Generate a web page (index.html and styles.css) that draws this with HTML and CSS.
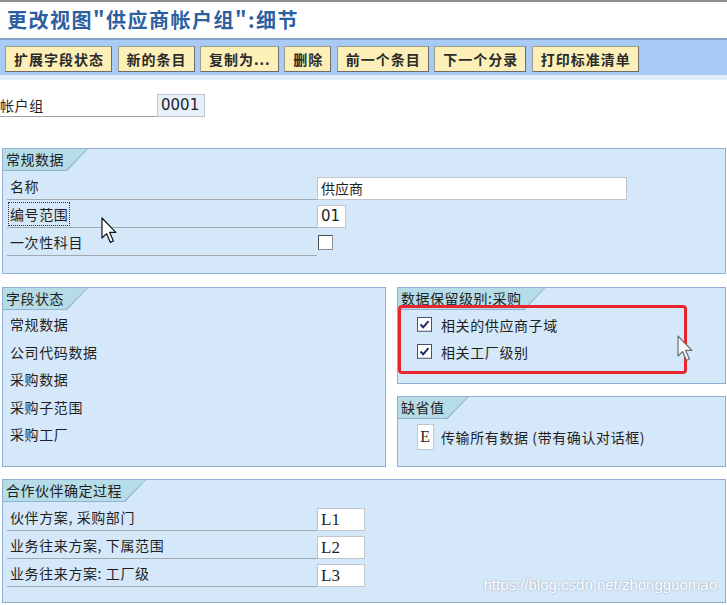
FILE: index.html
```html
<!DOCTYPE html>
<html lang="zh-CN">
<head>
  <meta charset="UTF-8">
  <title>更改视图"供应商帐户组":细节</title>
  <link rel="stylesheet" href="styles.css">
</head>
<body>

<div class="screen">
  <div class="titlebar">
    <h1>更改视图"供应商帐户组":细节</h1>
  </div>

  <div class="toolbar">
    <button class="btn">扩展字段状态</button>
    <button class="btn">新的条目</button>
    <button class="btn">复制为...</button>
    <button class="btn">删除</button>
    <button class="btn">前一个条目</button>
    <button class="btn">下一个分录</button>
    <button class="btn">打印标准清单</button>
  </div>

  <div class="content">
    <!-- key field -->
    <div class="keyrow">
      <span class="keylbl">帐户组</span>
      <span class="field num keyval">0001</span>
    </div>

    <!-- 常规数据 -->
    <section class="group general">
      <div class="tab"><span>常规数据</span></div>
      <div class="rows">
        <div class="row">
          <span class="lbl">名称</span>
          <span class="field name">供应商</span>
        </div>
        <div class="row">
          <span class="lbl"><span class="focus">编号范围</span></span>
          <span class="field num short">01</span>
        </div>
        <div class="row">
          <span class="lbl">一次性科目</span>
          <span class="checkbox"></span>
        </div>
      </div>
    </section>

    <div class="middle">
      <!-- 字段状态 -->
      <section class="group status">
        <div class="tab"><span>字段状态</span></div>
        <ul class="list">
          <li>常规数据</li>
          <li>公司代码数据</li>
          <li>采购数据</li>
          <li>采购子范围</li>
          <li>采购工厂</li>
        </ul>
      </section>

      <div class="side">
        <!-- 数据保留级别 -->
        <section class="group retain">
          <div class="tab"><span>数据保留级别:采购</span></div>
          <div class="checks">
            <div class="check">
              <svg width="15" height="15" viewBox="0 0 15 15">
                <rect x="0.5" y="0.5" width="14" height="14" fill="#fff" stroke="#4b5268"/>
                <line x1="1" y1="14" x2="14" y2="14" stroke="#9aa0b0"/>
                <path d="M3.5 7.5 L6.2 10.3 L11.5 4.2" fill="none" stroke="#1e2a66" stroke-width="2"/>
              </svg>
              <span>相关的供应商子域</span>
            </div>
            <div class="check">
              <svg width="15" height="15" viewBox="0 0 15 15">
                <rect x="0.5" y="0.5" width="14" height="14" fill="#fff" stroke="#4b5268"/>
                <line x1="1" y1="14" x2="14" y2="14" stroke="#9aa0b0"/>
                <path d="M3.5 7.5 L6.2 10.3 L11.5 4.2" fill="none" stroke="#1e2a66" stroke-width="2"/>
              </svg>
              <span>相关工厂级别</span>
            </div>
          </div>
          <div class="highlight"></div>
        </section>

        <!-- 缺省值 -->
        <section class="group defaults">
          <div class="tab"><span>缺省值</span></div>
          <div class="defrow">
            <span class="code">E</span>
            <span>传输所有数据 (带有确认对话框)</span>
          </div>
        </section>
      </div>
    </div>

    <!-- 合作伙伴确定过程 -->
    <section class="group partner">
      <div class="tab"><span>合作伙伴确定过程</span></div>
      <div class="rows">
        <div class="row">
          <span class="lbl">伙伴方案, 采购部门</span>
          <span class="field serif">L1</span>
        </div>
        <div class="row">
          <span class="lbl">业务往来方案, 下属范围</span>
          <span class="field serif">L2</span>
        </div>
        <div class="row">
          <span class="lbl">业务往来方案: 工厂级</span>
          <span class="field serif">L3</span>
        </div>
      </div>
    </section>
  </div>

  <!-- mouse pointers -->
  <svg class="cursor c1" width="16" height="27" viewBox="0 0 16 27">
    <path d="M1 1 L1 21 L5.6 16.6 L9.4 25.4 L12.4 24 L8.7 15.4 L14.8 15.4 Z" fill="#fff" stroke="#111" stroke-width="1.2" stroke-linejoin="round"/>
  </svg>
  <svg class="cursor c2" width="16" height="27" viewBox="0 0 16 27">
    <path d="M1 1 L1 21 L5.6 16.6 L9.4 25.4 L12.4 24 L8.7 15.4 L14.8 15.4 Z" fill="#f4f6f8" stroke="#6b6f76" stroke-width="1.2" stroke-linejoin="round"/>
  </svg>

  <div class="watermark">https://blog.csdn.net/zhongguomao</div>
</div>

</body>
</html>
```

FILE: styles.css
```css
body {
  margin: 0;
  font-family: "Noto Sans CJK SC", sans-serif;
  font-size: 14px;
  color: #1f1f1f;
  background: #fff;
}
.screen {
  position: relative;
  width: 727px;
  height: 605px;
  overflow: hidden;
}

/* title + toolbar */
.titlebar {
  height: 36px;
  border-top: 2px solid #8e8e8e;
}
.titlebar h1 {
  margin: 0;
  padding-left: 7px;
  font-size: 20px;
  line-height: 36px;
  letter-spacing: 1.5px;
  font-weight: bold;
  color: #2c5f9f;
}
.toolbar {
  display: flex;
  gap: 5.5px;
  padding: 6px 0 3px 5px;
  background: #a8cbf5;
  border-top: 2px solid #86a3c7;
  border-bottom: 5px solid #e3edfb;
}
.btn {
  height: 26px;
  box-sizing: border-box;
  padding: 0 7px 0 8px;
  border: 1px solid;
  border-color: #a09c8c #6e6c64 #6e6c64 #a09c8c;
  background: #fcefb8;
  font-family: inherit;
  font-size: 14px;
  font-weight: bold;
  letter-spacing: 1px;
  line-height: 22px;
  color: #2b2b2b;
}

/* page body */
.content {
  padding: 14px 1px 0 2px;
}
.keyrow {
  display: flex;
  height: 23px;
  margin-left: -2px;
}
.keylbl {
  width: 157px;
  box-sizing: border-box;
  border-bottom: 1px solid #a2a2a2;
  line-height: 22px;
  letter-spacing: 0.6px;
}
.field {
  box-sizing: border-box;
  height: 23px;
  padding-left: 3px;
  border: 1px solid #c1c6cc;
  background: #fff;
  line-height: 21px;
  white-space: nowrap;
}
.field.num {
  font-family: "DejaVu Sans", sans-serif;
  font-size: 15px;
}
.field.keyval {
  width: 48px;
  background: #e6effa;
}
.field.name { width: 310px; }
.field.short { width: 29px; }
.field.serif {
  width: 48px;
  font-family: "Liberation Serif", serif;
  font-size: 17px;
}

/* group boxes */
.group {
  position: relative;
  box-sizing: border-box;
  border: 1px solid #8fb1d8;
  background: #d5e8f9;
}
.tab {
  display: inline-block;
  vertical-align: top;
  padding-bottom: 1px;
  background: #8fb1d8;
  clip-path: polygon(0 0, 100% 0, calc(100% - 21px) 100%, 0 100%);
}
.tab span {
  display: block;
  padding: 0 24px 0 3px;
  line-height: 21px;
  letter-spacing: 0.5px;
  background: #b5dce7;
  clip-path: polygon(0 0, calc(100% - 1px) 0, calc(100% - 22px) 100%, 0 100%);
}
.general {
  height: 126px;
  margin-top: 31px;
}
.rows {
  padding: 1px 0 0 4px;
}
.row {
  display: flex;
  align-items: flex-end;
  height: 28px;
}
.lbl {
  width: 310px;
  height: 27px;
  box-sizing: border-box;
  padding-left: 3px;
  border-bottom: 1px solid #a3a8ae;
  line-height: 26px;
  letter-spacing: 0.6px;
  white-space: nowrap;
}
.focus {
  outline: 1px dotted #333;
  outline-offset: 1px;
}
.checkbox {
  align-self: center;
  width: 15px;
  height: 15px;
  box-sizing: border-box;
  margin-left: 1px;
  border: 1px solid #4d4d55;
  border-bottom-color: #8c8c96;
  border-right-color: #8c8c96;
  background: #fff;
}

.middle {
  display: grid;
  grid-template-columns: 384px 329px;
  column-gap: 11px;
  margin-top: 13px;
}
.status {
  height: 180px;
}
.list {
  list-style: none;
  margin: 0;
  padding: 1px 0 0 7px;
  height: 155px;
  line-height: 27.5px;
  letter-spacing: 0.6px;
  background: linear-gradient(to right, transparent 176px, #dde6fb 176px, #dde6fb 178px, transparent 178px);
}
.side {
  display: flex;
  flex-direction: column;
  gap: 12px;
}
.retain {
  height: 97px;
}
.checks {
  padding: 1px 0 0 19px;
}
.check {
  display: flex;
  align-items: center;
  gap: 9px;
  height: 27px;
  letter-spacing: 0.6px;
}
.check svg {
  display: block;
}
.highlight {
  position: absolute;
  left: 0;
  top: 17px;
  width: 289px;
  height: 69px;
  box-sizing: border-box;
  border: 3px solid #e8262c;
  border-radius: 4px;
}
.defaults {
  height: 71px;
}
.defrow {
  display: flex;
  align-items: center;
  gap: 7px;
  padding: 5px 0 0 19px;
  letter-spacing: 0.6px;
}
.code {
  width: 17px;
  height: 26px;
  box-sizing: border-box;
  border: 1px solid #c3c6cb;
  background: #fff;
  font-family: "Liberation Serif", serif;
  font-size: 16px;
  line-height: 24px;
  text-align: center;
}
.partner {
  height: 124px;
  margin-top: 12px;
}

/* overlays */
.cursor {
  position: absolute;
}
.cursor.c1 { left: 101px; top: 217px; }
.cursor.c2 { left: 677px; top: 335px; }
.watermark {
  position: absolute;
  right: 10px;
  top: 576px;
  font-family: "Liberation Sans", sans-serif;
  font-size: 15px;
  color: #fff;
  text-shadow: 0 0 2px rgba(70, 90, 120, 0.55);
}
```
